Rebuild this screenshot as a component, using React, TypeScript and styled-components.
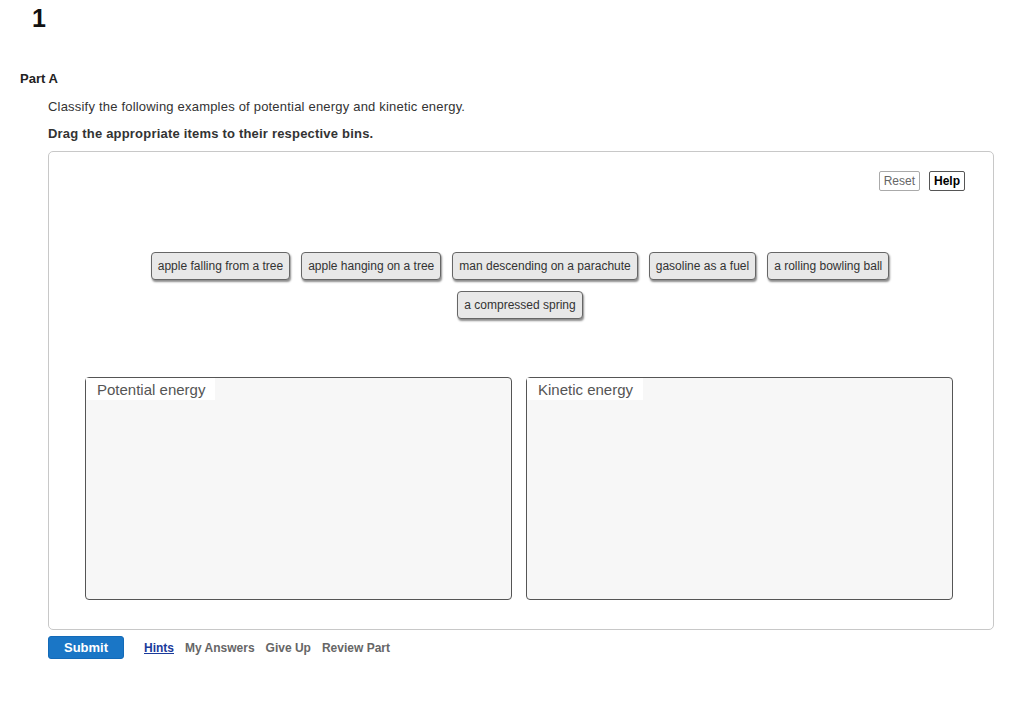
import React from "react";
import styled, { createGlobalStyle } from "styled-components";

const Global = createGlobalStyle`
  body { margin: 0; background: #fff; font-family: "Liberation Sans", Arial, sans-serif; }
`;
const Page = styled.div`padding: 4px 0 0 20px; width: 974px;`;
const Num = styled.div`font-size: 25px; font-weight: bold; color: #111; padding-left: 12px; height: 30px;`;
const PartTitle = styled.div`margin-top: 37px; font-size: 13px; font-weight: bold; color: #222;`;
const Body = styled.div`padding-left: 28px;`;
const Instr = styled.div<{ $bold?: boolean }>`
  font-size: 13px; color: #333; letter-spacing: 0.2px;
  font-weight: ${p => (p.$bold ? "bold" : "normal")};
  margin-top: ${p => (p.$bold ? "12px" : "13px")};
`;
const Box = styled.div`
  margin-top: 10px; border: 1px solid #c8c8c8; border-radius: 5px; height: 479px;
  width: 946px; box-sizing: border-box; display: flex; flex-direction: column; padding: 19px 28px 0 36px;
`;
const Tools = styled.div`display: flex; justify-content: flex-end; gap: 9px;`;
const ToolBtn = styled.button<{ $strong?: boolean }>`
  font-family: "Liberation Sans", Arial, sans-serif; font-size: 12px; height: 20px; padding: 0 4px;
  background: #fff; border: 1px solid ${p => (p.$strong ? "#555" : "#aaa")}; border-radius: 2px;
  color: ${p => (p.$strong ? "#000" : "#666")}; font-weight: ${p => (p.$strong ? "bold" : "normal")};
`;
const Chips = styled.div`
  margin-top: 61px; display: flex; flex-wrap: wrap; justify-content: center; gap: 11px 11px;
  padding: 0 40px 0 30px;
`;
const Chip = styled.div`
  height: 28px; box-sizing: border-box; padding: 0 6px; display: flex; align-items: center;
  font-size: 12px; color: #333; background: #e8e8e8; border: 1px solid #666; border-radius: 4px;
  box-shadow: 1px 2px 2px rgba(0,0,0,0.45);
`;
const Bins = styled.div`margin-top: 58px; display: flex; gap: 14px;`;
const Bin = styled.div`
  width: 427px; height: 223px; box-sizing: border-box; background: #f7f7f7;
  border: 1px solid #555; border-radius: 4px; position: relative;
`;
const BinLabel = styled.span`
  display: inline-block; background: #fff; color: #555; font-size: 15px; padding: 3px 10px 2px 11px;
`;
const Footer = styled.div`margin-top: 6px; display: flex; align-items: center; gap: 11px;`;
const Submit = styled.button`
  width: 76px; height: 23px; background: #1a76c6; color: #fff; border: 1px solid #136ab8; border-radius: 3px;
  font-family: "Liberation Sans", Arial, sans-serif; font-weight: bold; font-size: 13px; margin-right: 9px;
`;
const Link = styled.span<{ $blue?: boolean }>`
  font-size: 12px; font-weight: bold; color: ${p => (p.$blue ? "#1a3a9a" : "#666")};
  text-decoration: ${p => (p.$blue ? "underline" : "none")};
`;

const items = ["apple falling from a tree", "apple hanging on a tree", "man descending on a parachute", "gasoline as a fuel", "a rolling bowling ball", "a compressed spring"];

export default function App() {
  return (
    <Page>
      <Global />
      <Num>1</Num>
      <PartTitle>Part A</PartTitle>
      <Body>
        <Instr>Classify the following examples of potential energy and kinetic energy.</Instr>
        <Instr $bold>Drag the appropriate items to their respective bins.</Instr>
        <Box>
          <Tools>
            <ToolBtn>Reset</ToolBtn>
            <ToolBtn $strong>Help</ToolBtn>
          </Tools>
          <Chips>{items.map(i => <Chip key={i}>{i}</Chip>)}</Chips>
          <Bins>
            <Bin><BinLabel>Potential energy</BinLabel></Bin>
            <Bin><BinLabel>Kinetic energy</BinLabel></Bin>
          </Bins>
        </Box>
        <Footer>
          <Submit>Submit</Submit>
          <Link $blue>Hints</Link>
          <Link>My Answers</Link>
          <Link>Give Up</Link>
          <Link>Review Part</Link>
        </Footer>
      </Body>
    </Page>
  );
}
